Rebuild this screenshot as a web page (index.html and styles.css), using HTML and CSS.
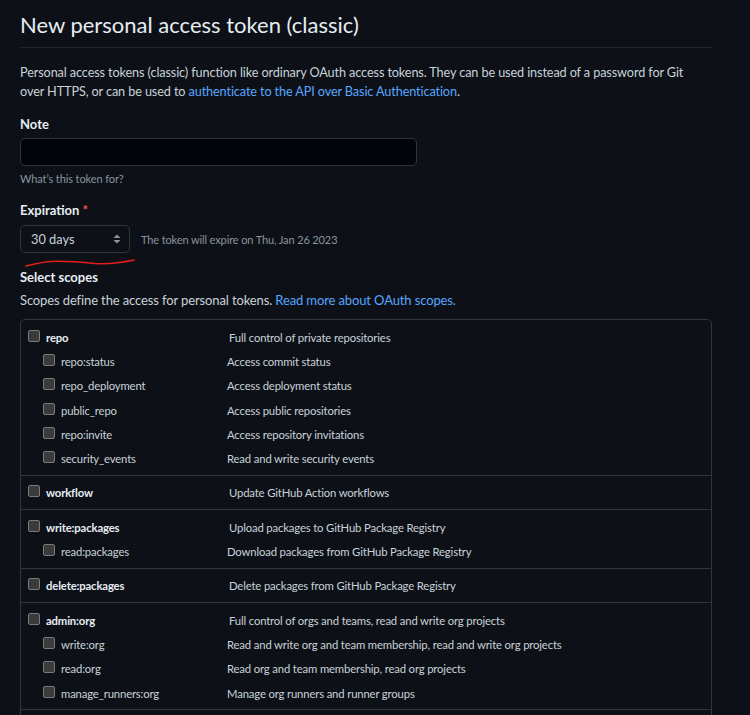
FILE: index.html
```html
<!DOCTYPE html>
<html lang="en">
<head>
<meta charset="utf-8">
<title>New personal access token (classic)</title>
<link rel="stylesheet" href="styles.css">
</head>
<body>
<div class="page">
  <h1 class="subhead">New personal access token (classic)</h1>
  <p class="intro">Personal access tokens (classic) function like ordinary OAuth access tokens. They can be used instead of a password for Git over HTTPS, or can be used to <a href="#">authenticate to the API over Basic Authentication</a>.</p>

  <div class="field">
    <label class="label">Note</label>
    <div class="input"></div>
    <p class="note">What’s this token for?</p>
  </div>

  <div class="field exp">
    <label class="label">Expiration <span class="req">*</span></label>
    <div class="exp-row">
      <div class="select">
        <span>30 days</span>
        <svg class="arrows" width="8" height="10" viewBox="0 0 8 10"><path d="M4 0.5 L7.5 4 L0.5 4 Z M4 9.5 L7.5 6 L0.5 6 Z" fill="#8b949e"/></svg>
      </div>
      <span class="exp-text">The token will expire on Thu, Jan 26 2023</span>
    </div>
    <svg class="squiggle" width="120" height="12" viewBox="0 0 120 12"><path d="M6 10 C 14 8, 22 6, 30 5.5 C 45 4.5, 60 6, 75 7.5 C 90 8.5, 100 7, 114 4" fill="none" stroke="#e81c1c" stroke-width="1.6" stroke-linecap="round"/></svg>
  </div>

  <h2 class="label scopes-title">Select scopes</h2>
  <p class="scopes-desc">Scopes define the access for personal tokens. <a href="#">Read more about OAuth scopes.</a></p>

  <div class="scopes">
    <div class="group">
      <div class="row top"><span class="cb"></span><span class="name">repo</span><span class="desc">Full control of private repositories</span></div>
      <div class="row sub"><span class="cb"></span><span class="name">repo:status</span><span class="desc">Access commit status</span></div>
      <div class="row sub"><span class="cb"></span><span class="name">repo_deployment</span><span class="desc">Access deployment status</span></div>
      <div class="row sub"><span class="cb"></span><span class="name">public_repo</span><span class="desc">Access public repositories</span></div>
      <div class="row sub"><span class="cb"></span><span class="name">repo:invite</span><span class="desc">Access repository invitations</span></div>
      <div class="row sub"><span class="cb"></span><span class="name">security_events</span><span class="desc">Read and write security events</span></div>
    </div>
    <div class="group">
      <div class="row top"><span class="cb"></span><span class="name">workflow</span><span class="desc">Update GitHub Action workflows</span></div>
    </div>
    <div class="group">
      <div class="row top"><span class="cb"></span><span class="name">write:packages</span><span class="desc">Upload packages to GitHub Package Registry</span></div>
      <div class="row sub"><span class="cb"></span><span class="name">read:packages</span><span class="desc">Download packages from GitHub Package Registry</span></div>
    </div>
    <div class="group">
      <div class="row top"><span class="cb"></span><span class="name">delete:packages</span><span class="desc">Delete packages from GitHub Package Registry</span></div>
    </div>
    <div class="group">
      <div class="row top"><span class="cb"></span><span class="name">admin:org</span><span class="desc">Full control of orgs and teams, read and write org projects</span></div>
      <div class="row sub"><span class="cb"></span><span class="name">write:org</span><span class="desc">Read and write org and team membership, read and write org projects</span></div>
      <div class="row sub"><span class="cb"></span><span class="name">read:org</span><span class="desc">Read org and team membership, read org projects</span></div>
      <div class="row sub"><span class="cb"></span><span class="name">manage_runners:org</span><span class="desc">Manage org runners and runner groups</span></div>
    </div>
    <div class="group">
      <div class="row top"><span class="cb"></span><span class="name">admin:public_key</span><span class="desc">Full control of user public keys</span></div>
    </div>
  </div>
</div>
</body>
</html>
```
FILE: styles.css
```css
html, body {
  margin: 0;
  padding: 0;
  background: #0d1117;
}
body {
  font-family: Lato, "Open Sans", sans-serif;
  color: #c9d1d9;
  font-size: 13px;
  overflow: hidden;
  height: 715px;
}
a {
  color: #58a6ff;
  text-decoration: none;
}
.page {
  width: 692px;
  margin-left: 20px;
}
.subhead {
  margin: 0;
  padding-top: 11px;
  padding-bottom: 8px;
  font-size: 22px;
  line-height: 28px;
  font-weight: 400;
  color: #e6edf3;
  border-bottom: 1px solid #21262d;
}
.intro {
  margin: 15px 0 0;
  max-width: 684px;
  line-height: 19px;
  font-size: 12.7px;
  letter-spacing: -0.12px;
}
.field {
  margin-top: 14px;
}
.label {
  display: block;
  margin: 0;
  font-size: 13px;
  font-weight: 700;
  line-height: 19px;
  color: #e6edf3;
}
.req {
  color: #f85149;
}
.input {
  margin-top: 4px;
  width: 395px;
  height: 26px;
  background: #010409;
  border: 1px solid #30363d;
  border-radius: 5px;
}
.note {
  margin: 4px 0 0;
  font-size: 11px;
  letter-spacing: -0.1px;
  line-height: 17px;
  color: #8b949e;
}
.exp {
  position: relative;
  margin-top: 14px;
}
.exp-row {
  margin-top: 5px;
  display: flex;
  align-items: center;
  gap: 11px;
}
.select {
  box-sizing: border-box;
  width: 110px;
  height: 28px;
  border: 1px solid #30363d;
  border-radius: 5px;
  display: flex;
  align-items: center;
  justify-content: space-between;
  padding: 0 8px 0 10px;
  font-size: 12.8px;
  color: #c9d1d9;
}
.arrows {
  display: block;
}
.exp-text {
  font-size: 11px;
  letter-spacing: -0.12px;
  color: #8b949e;
}
.squiggle {
  position: absolute;
  left: 0;
  top: 55px;
}
.scopes-title {
  margin-top: 15px;
}
.scopes-desc {
  margin: 4px 0 0;
  line-height: 19px;
  letter-spacing: -0.12px;
}
.scopes {
  margin-top: 9px;
  border: 1px solid #30363d;
  border-radius: 5px;
}
.group {
  padding: 5px 0 4px;
  border-bottom: 1px solid #30363d;
}
.row {
  height: 24.3px;
  display: flex;
  align-items: center;
  font-size: 11.3px;
  letter-spacing: -0.15px;
}
.cb {
  box-sizing: border-box;
  width: 12px;
  height: 12px;
  border: 1px solid #7a7a7a;
  border-radius: 2px;
  background: #3b3b3b;
  margin-top: -3px;
  flex: none;
}
.row.top .cb {
  margin-left: 7px;
}
.row.sub .cb {
  margin-left: 22px;
}
.name {
  margin-left: 6px;
  flex: none;
}
.row.top .name {
  width: 183px;
  font-weight: 700;
  color: #e6edf3;
}
.row.sub .name {
  width: 166px;
}
.desc {
  color: #c9d1d9;
}
```
